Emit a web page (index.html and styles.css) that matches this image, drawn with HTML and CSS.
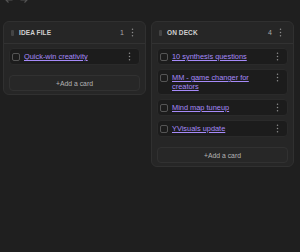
FILE: index.html
```html
<!DOCTYPE html>
<html>
<head>
<meta charset="utf-8">
<link rel="stylesheet" href="styles.css">
</head>
<body>
<div class="nav">
  <svg class="arrow" width="8" height="8" viewBox="0 0 8 8"><path d="M7.5 4H1M3.5 1.5L1 4l2.5 2.5" fill="none" stroke="#555" stroke-width="1.1"/></svg>
  <svg class="arrow" width="8" height="8" viewBox="0 0 8 8"><path d="M0.5 4H7M4.5 1.5L7 4 4.5 6.5" fill="none" stroke="#555" stroke-width="1.1"/></svg>
</div>
<div class="board">
  <div class="column">
    <div class="col-head">
      <span class="grip"></span>
      <span class="col-title">IDEA FILE</span>
      <span class="count">1</span>
      <svg class="kebab" width="3" height="9" viewBox="0 0 3 9"><circle cx="1.5" cy="1.3" r="0.75"/><circle cx="1.5" cy="4.5" r="0.75"/><circle cx="1.5" cy="7.7" r="0.75"/></svg>
    </div>
    <div class="col-body">
      <div class="cards">
        <div class="card">
          <span class="check"></span>
          <a class="title">Quick-win creativity</a>
          <svg class="kebab" width="3" height="9" viewBox="0 0 3 9"><circle cx="1.5" cy="1.3" r="0.75"/><circle cx="1.5" cy="4.5" r="0.75"/><circle cx="1.5" cy="7.7" r="0.75"/></svg>
        </div>
      </div>
      <div class="add">+Add a card</div>
    </div>
  </div>
  <div class="column">
    <div class="col-head">
      <span class="grip"></span>
      <span class="col-title">ON DECK</span>
      <span class="count">4</span>
      <svg class="kebab" width="3" height="9" viewBox="0 0 3 9"><circle cx="1.5" cy="1.3" r="0.75"/><circle cx="1.5" cy="4.5" r="0.75"/><circle cx="1.5" cy="7.7" r="0.75"/></svg>
    </div>
    <div class="col-body">
      <div class="cards">
        <div class="card">
          <span class="check"></span>
          <a class="title">10 synthesis questions</a>
          <svg class="kebab" width="3" height="9" viewBox="0 0 3 9"><circle cx="1.5" cy="1.3" r="0.75"/><circle cx="1.5" cy="4.5" r="0.75"/><circle cx="1.5" cy="7.7" r="0.75"/></svg>
        </div>
        <div class="card">
          <span class="check"></span>
          <a class="title">MM - game changer for creators</a>
          <svg class="kebab" width="3" height="9" viewBox="0 0 3 9"><circle cx="1.5" cy="1.3" r="0.75"/><circle cx="1.5" cy="4.5" r="0.75"/><circle cx="1.5" cy="7.7" r="0.75"/></svg>
        </div>
        <div class="card">
          <span class="check"></span>
          <a class="title">Mind map tuneup</a>
          <svg class="kebab" width="3" height="9" viewBox="0 0 3 9"><circle cx="1.5" cy="1.3" r="0.75"/><circle cx="1.5" cy="4.5" r="0.75"/><circle cx="1.5" cy="7.7" r="0.75"/></svg>
        </div>
        <div class="card">
          <span class="check"></span>
          <a class="title">YVisuals update</a>
          <svg class="kebab" width="3" height="9" viewBox="0 0 3 9"><circle cx="1.5" cy="1.3" r="0.75"/><circle cx="1.5" cy="4.5" r="0.75"/><circle cx="1.5" cy="7.7" r="0.75"/></svg>
        </div>
      </div>
      <div class="add">+Add a card</div>
    </div>
  </div>
</div>
</body>
</html>
```
FILE: styles.css
```css
html, body {
  margin: 0;
  padding: 0;
  background: #1f1f1f;
  font-family: "Liberation Sans", Arial, sans-serif;
  height: 100%;
  overflow: hidden;
}
.nav {
  display: flex;
  gap: 7px;
  height: 8px;
  margin-top: -4px;
  padding-left: 5px;
}
.board {
  display: flex;
  align-items: flex-start;
  gap: 5px;
  margin-top: 17px;
  padding-left: 3px;
}
.column {
  flex: none;
  width: 143px;
  box-sizing: border-box;
  background: #262626;
  border: 1px solid #303030;
  border-radius: 6px;
}
.col-head {
  display: flex;
  align-items: center;
  height: 21px;
  padding: 0 11px 0 7px;
  border-bottom: 1px solid #323232;
}
.grip {
  width: 3px;
  height: 6px;
  border-radius: 1px;
  background: #444;
  margin-right: 5px;
}
.col-title {
  flex: 1;
  font-size: 6.5px;
  font-weight: bold;
  color: #d0d0d0;
  letter-spacing: 0.1px;
}
.count {
  font-size: 7px;
  color: #a8a8a8;
  margin-right: 7px;
}
.kebab {
  fill: #8c8c8c;
  flex: none;
}
.col-body {
  padding: 4px 5px 3px;
}
.cards {
  display: flex;
  flex-direction: column;
  gap: 4px;
}
.card {
  display: flex;
  align-items: flex-start;
  background: #1c1c1c;
  border: 1px solid #2a2a2a;
  border-radius: 4px;
  padding: 3px 8px 3px 2px;
}
.check {
  flex: none;
  width: 8px;
  height: 8px;
  box-sizing: border-box;
  border: 1px solid #555;
  border-radius: 2px;
  margin-top: 0.5px;
  margin-right: 4px;
}
.title {
  flex: 1;
  font-size: 7.4px;
  line-height: 9px;
  color: #a68af9;
  text-decoration: underline;
  margin-right: 6px;
}
.add {
  margin-top: 10px;
  height: 16px;
  box-sizing: border-box;
  border: 1px solid #313131;
  border-radius: 4px;
  background: #272727;
  display: flex;
  align-items: center;
  justify-content: center;
  font-size: 6.8px;
  color: #b4b4b4;
}
```
